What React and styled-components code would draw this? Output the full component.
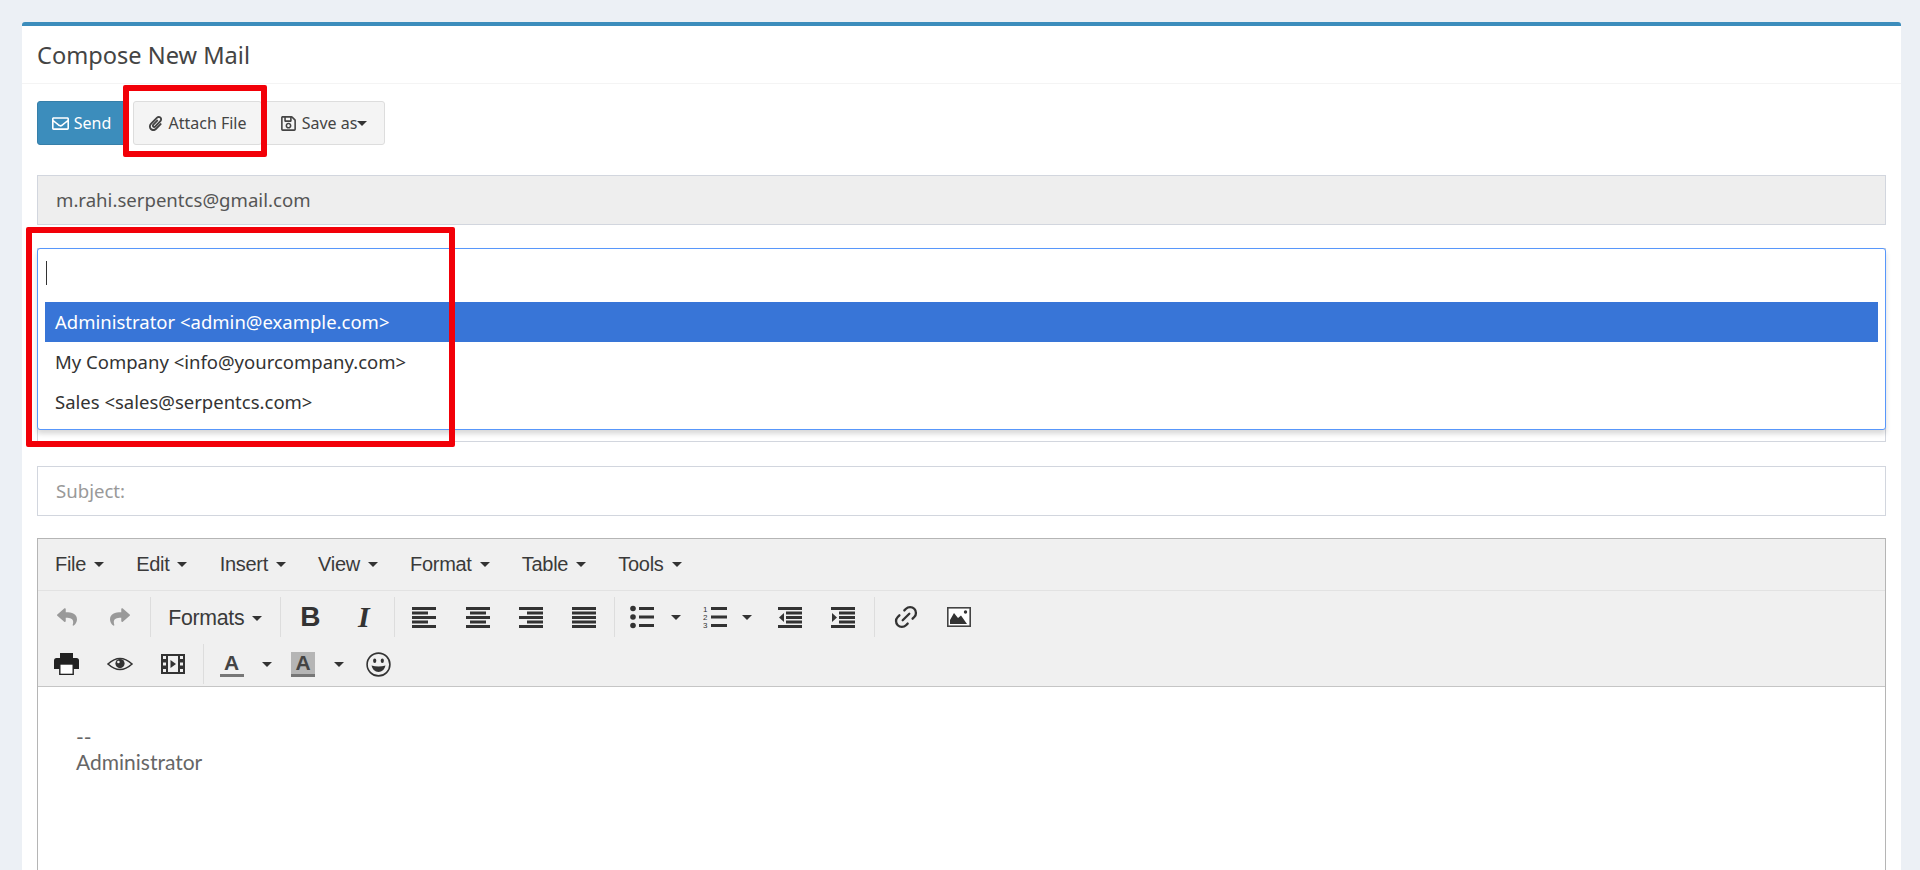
import React from "react";
import styled, { createGlobalStyle } from "styled-components";
import { FaPaperclip, FaRegEnvelope, FaRegSave, FaReply, FaShare } from "react-icons/fa";
import { Link2 } from "lucide-react";

const GlobalStyle = createGlobalStyle`
  html, body {
    margin: 0;
    height: 870px;
    overflow: hidden;
    background: #ecf0f5;
  }
  * { box-sizing: border-box; }
`;

const Page = styled.div`
  padding: 22px 19px 0 22px;
  font-family: "Noto Sans", sans-serif;
  color: #444;
`;

const Card = styled.div`
  background: #fff;
  border-top: 4px solid #3c8dbc;
  border-radius: 3px 3px 0 0;
  height: 848px;
  overflow: hidden;
`;

const CardHeader = styled.div`
  height: 58px;
  padding: 0 15px;
  display: flex;
  align-items: center;
  border-bottom: 1px solid #f4f4f4;
`;

const Title = styled.h3`
  margin: 0;
  font-size: 23.6px;
  font-weight: 400;
  color: #444;
`;

const CardBody = styled.div`
  padding: 17px 15px 0;
  display: flex;
  flex-direction: column;
`;

const ButtonBar = styled.div`
  position: relative;
  display: flex;
  height: 44px;
  margin-bottom: 30px;
`;

const Btn = styled.button`
  height: 44px;
  width: ${(p) => p.$w}px;
  margin-left: ${(p) => p.$ml || 0}px;
  padding: 0;
  display: flex;
  align-items: center;
  justify-content: center;
  gap: 5px;
  font: 400 16px "Noto Sans", sans-serif;
  color: ${(p) => (p.$primary ? "#fff" : "#444")};
  background: ${(p) => (p.$primary ? "#3c8dbc" : "#f4f4f4")};
  border: 1px solid ${(p) => (p.$primary ? "#367fa9" : "#ddd")};
  border-radius: 3px;
`;

const Caret = styled.i`
  display: inline-block;
  width: 0;
  height: 0;
  margin-left: ${(p) => p.$ml || 0}px;
  border-top: 5px solid ${(p) => p.$color || "#333"};
  border-left: 5px solid transparent;
  border-right: 5px solid transparent;
`;

const Field = styled.div`
  height: 50px;
  margin-bottom: ${(p) => p.$mb || 23}px;
  padding: 0 18px 2px;
  display: flex;
  align-items: center;
  font-size: 18.6px;
  color: ${(p) => p.$color || "#555"};
  background: ${(p) => p.$bg || "#fff"};
  border: 1px solid #d2d6de;
`;

const ToField = styled.div`
  position: relative;
  height: 194px;
  margin-bottom: 24px;
  border: 1px solid #d2d6de;
`;

const Dropdown = styled.div`
  position: absolute;
  top: -1px;
  left: -1px;
  right: -1px;
  height: 182px;
  padding: 12px 7px 0;
  background: #fff;
  border: 1px solid #5897fb;
  border-radius: 3px;
  box-shadow: 0 4px 5px rgba(0, 0, 0, 0.15);
`;

const TextCursor = styled.div`
  width: 1px;
  height: 24px;
  margin-left: 1px;
  margin-bottom: 17px;
  background: #333;
`;

const Option = styled.div`
  height: 40px;
  padding: 0 0 2px 10px;
  display: flex;
  align-items: center;
  font-size: 18.5px;
  color: ${(p) => (p.$active ? "#fff" : "#333")};
  background: ${(p) => (p.$active ? "#3875d7" : "transparent")};
`;

const Annotation = styled.div`
  position: absolute;
  left: ${(p) => p.$x}px;
  top: ${(p) => p.$y}px;
  width: ${(p) => p.$w}px;
  height: ${(p) => p.$h}px;
  border: 6px solid #f20008;
  border-radius: 2px;
  pointer-events: none;
`;

const Editor = styled.div`
  border: 1px solid #b5b5b5;
  border-bottom: 0;
  font-family: "Liberation Sans", sans-serif;
  height: 400px;
`;

const MenuBar = styled.div`
  height: 52px;
  padding-left: 17px;
  display: flex;
  align-items: center;
  gap: 32.2px;
  background: #f0f0f0;
  border-bottom: 1px solid #e2e2e2;
`;

const MenuItem = styled.div`
  display: flex;
  align-items: center;
  gap: 8px;
  padding-top: ${(p) => p.$top || 0}px;
  font-size: ${(p) => p.$size || 20}px;
  letter-spacing: -0.3px;
  color: #3a3a3a;
`;

const Toolbar = styled.div`
  height: 96px;
  padding: 2px 0 0 2px;
  background: #f0f0f0;
  border-bottom: 1px solid #c5c5c5;
`;

const ToolRow = styled.div`
  display: flex;
  align-items: center;
  height: ${(p) => p.$h}px;
`;

const ToolBtn = styled.div`
  width: ${(p) => p.$w || 53.4}px;
  height: 36px;
  display: flex;
  align-items: center;
  justify-content: center;
  color: ${(p) => p.$color || "#333"};
  font-size: 20px;
`;

const Divider = styled.div`
  width: 1px;
  height: ${(p) => p.$h || 40}px;
  margin: 0 ${(p) => p.$mx || 3}px;
  background: #ddd;
`;

const BoldGlyph = styled.span`
  font: 700 28px "Liberation Sans", sans-serif;
  color: #333;
`;

const ItalicGlyph = styled.span`
  font: italic 700 30px "Liberation Serif", serif;
  color: #333;
`;

const ColorGlyph = styled.span`
  display: block;
  width: 24px;
  height: 25px;
  text-align: center;
  font: 700 21px/21px "Liberation Sans", sans-serif;
  color: #444;
  background: ${(p) => (p.$marked ? "#b5b5b5" : "transparent")};
  border-bottom: 3px solid #777;
`;

const EditArea = styled.div`
  padding: 37px 0 0 38px;
  font: 400 21px/25px Lato, sans-serif;
  color: #666;
`;

const lineSets = {
  left: [[0, 24], [0, 16], [0, 24], [0, 16], [0, 24]],
  center: [[0, 24], [4, 16], [0, 24], [4, 16], [0, 24]],
  right: [[0, 24], [8, 16], [0, 24], [8, 16], [0, 24]],
  justify: [[0, 24], [0, 24], [0, 24], [0, 24], [0, 24]],
};

const Lines = ({ kind }) => (
  <svg width="24" height="21" viewBox="0 0 24 21" fill="#333">
    {lineSets[kind].map(([x, w], i) => (
      <rect key={i} x={x} y={i * 4.5} width={w} height="3" />
    ))}
  </svg>
);

const BulletList = () => (
  <svg width="24" height="24" viewBox="0 0 24 24" fill="#333">
    <circle cx="3" cy="3.5" r="2.8" />
    <circle cx="3" cy="12" r="2.8" />
    <circle cx="3" cy="20.5" r="2.8" />
    <rect x="9" y="2" width="15" height="3" />
    <rect x="9" y="10.5" width="15" height="3" />
    <rect x="9" y="19" width="15" height="3" />
  </svg>
);

const NumberList = () => (
  <svg width="24" height="24" viewBox="0 0 24 24" fill="#333">
    <text x="0" y="7" fontSize="8" fontFamily="Liberation Sans">1</text>
    <text x="0" y="15" fontSize="8" fontFamily="Liberation Sans">2</text>
    <text x="0" y="23" fontSize="8" fontFamily="Liberation Sans">3</text>
    <rect x="8" y="2" width="16" height="3" />
    <rect x="8" y="10.5" width="16" height="3" />
    <rect x="8" y="19" width="16" height="3" />
  </svg>
);

const Indent = ({ out }) => (
  <svg width="24" height="21" viewBox="0 0 24 21" fill="#333">
    <rect x="0" y="0" width="24" height="3" />
    <rect x="8" y="4.5" width="16" height="3" />
    <rect x="8" y="9" width="16" height="3" />
    <rect x="8" y="13.5" width="16" height="3" />
    <rect x="0" y="18" width="24" height="3" />
    <path d={out ? "M6 6 L1 10.5 L6 15 Z" : "M1 6 L6 10.5 L1 15 Z"} />
  </svg>
);

const ImageIcon = () => (
  <svg width="24" height="20" viewBox="0 0 24 20">
    <rect x="0.8" y="0.8" width="22.4" height="18.4" fill="#fff" stroke="#444" strokeWidth="1.6" />
    <path d="M3 17 L3 13 L7 6 L11 11 L14 8.5 L20 17 Z" fill="#333" />
    <circle cx="18.5" cy="5" r="1.7" fill="#333" />
  </svg>
);

const FilmIcon = () => (
  <svg width="24" height="20" viewBox="0 0 24 20" fill="#333">
    <path fillRule="evenodd" d="M0 0H24V20H0Z M2 2V5H5V2Z M2 8.5V11.5H5V8.5Z M2 15V18H5V15Z M19 2V5H22V2Z M19 8.5V11.5H22V8.5Z M19 15V18H22V15Z M7 2V18H17V2Z" />
    <path d="M9.5 6 L15 10 L9.5 14 Z" />
  </svg>
);

const PrintIcon = () => (
  <svg width="25" height="22" viewBox="0 0 25 22">
    <rect x="6" y="0" width="13" height="6" fill="#222" />
    <path d="M2.5 5H22.5Q25 5 25 7.5V16H0V7.5Q0 5 2.5 5Z" fill="#222" />
    <rect x="5.8" y="11" width="13.4" height="10.4" fill="#fff" stroke="#222" strokeWidth="1.4" />
  </svg>
);

const EyeIcon = () => (
  <svg width="26" height="16" viewBox="0 0 26 16">
    <path d="M1 8Q13 -3 25 8Q13 19 1 8Z" fill="none" stroke="#333" strokeWidth="1.6" />
    <circle cx="13" cy="7.6" r="4.6" fill="#333" />
    <circle cx="11.4" cy="6" r="1.3" fill="#f0f0f0" />
  </svg>
);

const SmileIcon = () => (
  <svg width="25" height="25" viewBox="0 0 25 25">
    <circle cx="12.5" cy="12.5" r="11.4" fill="none" stroke="#333" strokeWidth="1.6" />
    <ellipse cx="8.7" cy="8.8" rx="1.6" ry="2.2" fill="#333" />
    <ellipse cx="16.3" cy="8.8" rx="1.6" ry="2.2" fill="#333" />
    <path d="M5.5 13.5Q12.5 15.5 19.5 13.5Q18 20 12.5 20Q7 20 5.5 13.5Z" fill="#333" />
  </svg>
);

const menus = ["File", "Edit", "Insert", "View", "Format", "Table", "Tools"];

export default function App() {
  return (
    <Page>
      <GlobalStyle />
      <Card>
        <CardHeader>
          <Title>Compose New Mail</Title>
        </CardHeader>
        <CardBody>
          <ButtonBar>
            <Btn $primary $w={89}>
              <FaRegEnvelope size={17} />
              Send
            </Btn>
            <Btn $w={129} $ml={7}>
              <FaPaperclip size={15} />
              Attach File
            </Btn>
            <Btn $w={123}>
              <FaRegSave size={17} />
              Save as
              <Caret $ml={-5} />
            </Btn>
            <Annotation $x={86} $y={-16} $w={144} $h={72} />
          </ButtonBar>
          <Field $bg="#eee">m.rahi.serpentcs@gmail.com</Field>
          <ToField>
            <Dropdown>
              <TextCursor />
              <Option $active>Administrator &lt;admin@example.com&gt;</Option>
              <Option>My Company &lt;info@yourcompany.com&gt;</Option>
              <Option>Sales &lt;sales@serpentcs.com&gt;</Option>
            </Dropdown>
            <Annotation $x={-12} $y={-22} $w={429} $h={220} />
          </ToField>
          <Field $color="#999" $mb={22}>Subject:</Field>
          <Editor>
            <MenuBar>
              {menus.map((m) => (
                <MenuItem key={m}>
                  {m}
                  <Caret />
                </MenuItem>
              ))}
            </MenuBar>
            <Toolbar>
              <ToolRow $h={48}>
                <ToolBtn $color="#999"><FaReply size={20} /></ToolBtn>
                <ToolBtn $color="#999"><FaShare size={20} /></ToolBtn>
                <Divider />
                <ToolBtn $w={123}>
                  <MenuItem $size={21.3} $top={3}>
                    Formats
                    <Caret />
                  </MenuItem>
                </ToolBtn>
                <Divider />
                <ToolBtn><BoldGlyph>B</BoldGlyph></ToolBtn>
                <ToolBtn><ItalicGlyph>I</ItalicGlyph></ToolBtn>
                <Divider />
                <ToolBtn><Lines kind="left" /></ToolBtn>
                <ToolBtn><Lines kind="center" /></ToolBtn>
                <ToolBtn><Lines kind="right" /></ToolBtn>
                <ToolBtn><Lines kind="justify" /></ToolBtn>
                <Divider />
                <ToolBtn $w={74}><BulletList /><Caret $ml={17} /></ToolBtn>
                <ToolBtn $w={71}><NumberList /><Caret $ml={15} /></ToolBtn>
                <ToolBtn><Indent out /></ToolBtn>
                <ToolBtn><Indent /></ToolBtn>
                <Divider $mx={4} />
                <ToolBtn><Link2 size={28} strokeWidth={2} style={{ transform: "rotate(-45deg)" }} /></ToolBtn>
                <ToolBtn><ImageIcon /></ToolBtn>
              </ToolRow>
              <ToolRow $h={46}>
                <ToolBtn><PrintIcon /></ToolBtn>
                <ToolBtn><EyeIcon /></ToolBtn>
                <ToolBtn><FilmIcon /></ToolBtn>
                <Divider $h={40} />
                <ToolBtn $w={49}><ColorGlyph>A</ColorGlyph></ToolBtn>
                <ToolBtn $w={22}><Caret /></ToolBtn>
                <ToolBtn $w={50}><ColorGlyph $marked>A</ColorGlyph></ToolBtn>
                <ToolBtn $w={22}><Caret /></ToolBtn>
                <ToolBtn $w={57}><SmileIcon /></ToolBtn>
              </ToolRow>
            </Toolbar>
            <EditArea>
              --
              <br />
              Administrator
            </EditArea>
          </Editor>
        </CardBody>
      </Card>
    </Page>
  );
}
